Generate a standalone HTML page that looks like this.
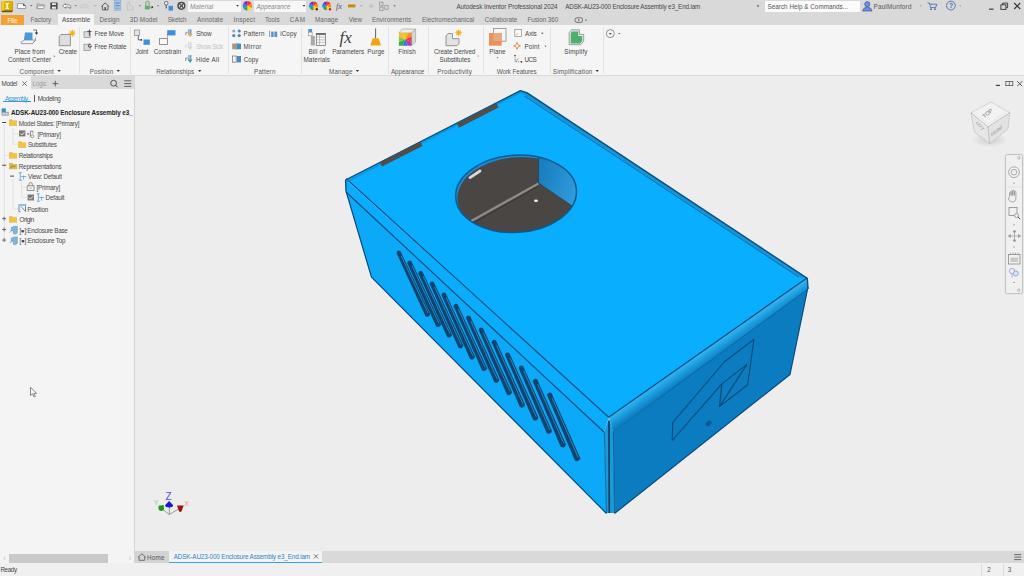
<!DOCTYPE html>
<html><head><meta charset="utf-8">
<style>
*{margin:0;padding:0;box-sizing:border-box}
html,body{width:1024px;height:576px;overflow:hidden;background:#ededed;font-family:"Liberation Sans",sans-serif;color:#3c3c3c}
.a{position:absolute}
.t{position:absolute;line-height:1;white-space:nowrap;font-size:6.3px}
svg{position:absolute;left:0;top:0;overflow:visible}
</style></head><body>
<div class="a" style="left:0;top:0;width:1024px;height:26px;background:#d9d9d9"></div>
<div class="a" style="left:0.5px;top:15px;width:23.5px;height:10px;background:#f5a132"></div>
<div class="a" style="left:57.6px;top:14.4px;width:36.6px;height:12px;background:#f5f5f5"></div>
<div class="a" style="left:187.7px;top:1px;width:53px;height:10.5px;background:#f7f7f7"></div>
<div class="a" style="left:253.7px;top:1px;width:52.3px;height:10.5px;background:#f7f7f7"></div>
<div class="a" style="left:765px;top:1px;width:94.7px;height:10.5px;background:#fbfbfb"></div>
<div class="a" style="left:0;top:25px;width:1024px;height:51px;background:#f5f5f5;border-bottom:1px solid #d9d9d9"></div>
<div class="a" style="left:79.3px;top:27px;width:1px;height:47px;background:#e2e2e2"></div>
<div class="a" style="left:130.4px;top:27px;width:1px;height:47px;background:#e2e2e2"></div>
<div class="a" style="left:228px;top:27px;width:1px;height:47px;background:#e2e2e2"></div>
<div class="a" style="left:300.8px;top:27px;width:1px;height:47px;background:#e2e2e2"></div>
<div class="a" style="left:387.5px;top:27px;width:1px;height:47px;background:#e2e2e2"></div>
<div class="a" style="left:427.7px;top:27px;width:1px;height:47px;background:#e2e2e2"></div>
<div class="a" style="left:482.6px;top:27px;width:1px;height:47px;background:#e2e2e2"></div>
<div class="a" style="left:549.5px;top:27px;width:1px;height:47px;background:#e2e2e2"></div>
<div class="a" style="left:602.5px;top:27px;width:1px;height:47px;background:#e2e2e2"></div>
<div class="a" style="left:0;top:76px;width:135px;height:487px;background:#f4f4f4;border-right:1px solid #d6d6d6"></div>
<div class="a" style="left:31px;top:76px;width:103px;height:13.2px;background:#d9d9d9"></div>
<div class="a" style="left:3.3px;top:101.2px;width:27.7px;height:0.8px;background:#3b9bd6"></div>
<div class="a" style="left:34.2px;top:94.5px;width:0.8px;height:7.5px;background:#555"></div>
<div class="a" style="left:8.8px;top:553.8px;width:99.2px;height:8.8px;background:#c9c9c9"></div>
<div class="a" style="left:134.5px;top:551px;width:890px;height:11.6px;background:#d9d9d9"></div>
<div class="a" style="left:134.5px;top:551px;width:34.3px;height:11.6px;background:#d3d3d3"></div>
<div class="a" style="left:168.8px;top:551px;width:152.9px;height:11.6px;background:#f3f3f3;border-bottom:1.2px solid #3aa0e0"></div>
<div class="a" style="left:0;top:563px;width:1024px;height:13px;background:#f0f0f0"></div>
<div class="a" style="left:981px;top:564px;width:1px;height:12px;background:#dcdcdc"></div>
<div class="a" style="left:1003px;top:564px;width:1px;height:12px;background:#dcdcdc"></div>
<svg width="1024" height="576" viewBox="0 0 1024 576">
  <defs>
    <linearGradient id="rb" gradientUnits="userSpaceOnUse" x1="708" y1="347.5" x2="715.5" y2="358.2">
      <stop offset="0" stop-color="#36b6f4"/><stop offset="0.45" stop-color="#1c9edf"/><stop offset="1" stop-color="#0b7dc0"/>
    </linearGradient>
    <linearGradient id="iw" x1="0" y1="0" x2="1" y2="0.3">
      <stop offset="0" stop-color="#1578b8"/><stop offset="1" stop-color="#36a6e6"/>
    </linearGradient>
    <clipPath id="hc"><ellipse cx="516.1" cy="193.8" rx="60.5" ry="38.6" transform="rotate(-3.7 516.1 193.8)"/></clipPath>
  </defs>
  <!-- left face -->
  <polygon points="346,191 604,432 606.5,513.5 371.5,277.2" fill="#0ca9f8"/>
  <!-- right face -->
  <polygon points="613,432 808,287 790,374.5 614.5,513.5" fill="#0a7cbf"/>
  <!-- left bend -->
  <polygon points="345.6,179.5 609,417 604,432 346,192" fill="#0aadfc"/>
  <!-- right bend -->
  <polygon points="609,417 807,278 808,289 613,432" fill="url(#rb)"/>
  <!-- seam -->
  <polygon points="604,432 609,418 613.3,432 614.5,513 606.5,513" fill="#1a9ad8"/>
  <line x1="609" y1="421" x2="609.3" y2="513" stroke="#0a3a5c" stroke-width="1.6"/>
  <line x1="604.3" y1="432" x2="606.5" y2="513" stroke="#0b5a8c" stroke-width="0.8"/>
  <line x1="613.3" y1="432" x2="614.5" y2="513" stroke="#0b5a8c" stroke-width="0.8"/>
  <!-- top face -->
  <polygon points="345.6,179.5 520.4,90.3 527,92 807,278 609,417" fill="#0aaefe"/>
  <!-- hole -->
  <ellipse cx="516.1" cy="193.8" rx="60.5" ry="38.6" transform="rotate(-3.7 516.1 193.8)" fill="#168ed6"/>
  <g clip-path="url(#hc)">
    <ellipse cx="517.8" cy="195.8" rx="60.5" ry="38.6" transform="rotate(-3.7 517.8 195.8)" fill="#4a4643"/>
    <polygon points="538,150 538,183 572,206 600,206 600,150" fill="url(#iw)"/>
    <line x1="538.5" y1="183.5" x2="466" y2="224" stroke="#8d8b89" stroke-width="2.4"/>
    <line x1="538.5" y1="186" x2="468" y2="226" stroke="#2e2c2a" stroke-width="0.7"/>
    <line x1="538.5" y1="150" x2="538.5" y2="183" stroke="#2b3a44" stroke-width="0.8"/>
    <line x1="538.5" y1="183" x2="575" y2="208" stroke="#2b3a44" stroke-width="0.8"/>
    <path d="M470,177.6 L480,171" stroke="#d8d8d8" stroke-width="2.8" stroke-linecap="round"/>
  </g>
  <ellipse cx="536" cy="200.8" rx="1.9" ry="1.3" fill="#f2f2f2"/>
  <ellipse cx="516.1" cy="193.8" rx="60.5" ry="38.6" transform="rotate(-3.7 516.1 193.8)" fill="none" stroke="#0b5a90" stroke-width="1.5"/>
  <!-- hinge strips -->
  
  
  <!-- vents -->
  <g fill="#0b4470">
<path d="M400.5,251.2 L430.2,314.0 Q429.3,318.2 425.5,316.2 L396.5,253.0 Q397.2,249.4 400.5,251.2 Z"/>
<path d="M411.3,261.1 L441.0,324.2 Q440.0,328.4 436.2,326.4 L407.2,263.0 Q408.0,259.4 411.3,261.1 Z"/>
<path d="M422.4,271.4 L452.0,334.7 Q451.0,338.9 447.2,336.9 L418.3,273.3 Q419.1,269.6 422.4,271.4 Z"/>
<path d="M433.8,282.1 L463.4,345.5 Q462.3,349.7 458.5,347.8 L429.7,284.0 Q430.5,280.3 433.8,282.1 Z"/>
<path d="M445.6,293.0 L475.0,356.7 Q474.0,360.9 470.1,358.9 L441.4,294.9 Q442.3,291.3 445.6,293.0 Z"/>
<path d="M457.7,304.4 L487.1,368.2 Q486.0,372.4 482.1,370.5 L453.5,306.3 Q454.4,302.6 457.7,304.4 Z"/>
<path d="M470.1,316.0 L499.4,380.1 Q498.3,384.3 494.4,382.3 L465.9,317.9 Q466.8,314.2 470.1,316.0 Z"/>
<path d="M482.9,328.0 L512.1,392.3 Q510.9,396.5 507.0,394.5 L478.6,329.9 Q479.5,326.2 482.9,328.0 Z"/>
<path d="M495.9,340.3 L525.1,404.8 Q523.9,409.1 519.9,407.1 L491.6,342.2 Q492.6,338.5 495.9,340.3 Z"/>
<path d="M509.3,353.0 L538.4,417.7 Q537.2,421.9 533.2,420.0 L505.0,354.9 Q505.9,351.2 509.3,353.0 Z"/>
<path d="M523.1,366.0 L552.0,430.9 Q550.8,435.2 546.8,433.2 L518.6,367.9 Q519.7,364.2 523.1,366.0 Z"/>
<path d="M537.1,379.3 L566.0,444.5 Q564.7,448.7 560.7,446.8 L532.7,381.3 Q533.7,377.6 537.1,379.3 Z"/>
<path d="M551.5,393.0 L580.3,458.3 Q579.0,462.6 575.0,460.7 L547.0,395.0 Q548.1,391.3 551.5,393.0 Z"/>
</g>
  <g stroke="#2a8cc8" stroke-width="0.9" stroke-linecap="round">
<line x1="401.4" y1="256.3" x2="428.0" y2="312.8"/>
<line x1="412.2" y1="266.2" x2="438.7" y2="323.0"/>
<line x1="423.3" y1="276.5" x2="449.8" y2="333.5"/>
<line x1="434.7" y1="287.2" x2="461.1" y2="344.3"/>
<line x1="446.4" y1="298.1" x2="472.8" y2="355.5"/>
<line x1="458.5" y1="309.5" x2="484.8" y2="367.0"/>
<line x1="470.9" y1="321.1" x2="497.1" y2="378.9"/>
<line x1="483.6" y1="333.1" x2="509.8" y2="391.1"/>
<line x1="496.7" y1="345.5" x2="522.8" y2="403.6"/>
<line x1="510.1" y1="358.1" x2="536.1" y2="416.5"/>
<line x1="523.8" y1="371.1" x2="549.7" y2="429.7"/>
<line x1="537.8" y1="384.5" x2="563.7" y2="443.3"/>
<line x1="552.2" y1="398.2" x2="578.0" y2="457.2"/>
</g>
  <!-- logo -->
  <path d="M672.2,440.5 L721.9,383.9 L746.9,364.4 L719.5,406.6 L721.9,383.9 M719.5,406.6 L747.7,384.7 L753.9,339.4 L724.2,362 L672.8,422.5 L672.2,440.5" fill="none" stroke="#0a4a78" stroke-width="1.1" stroke-linejoin="round"/>
  <ellipse cx="708.6" cy="423.4" rx="3" ry="1.8" transform="rotate(-40 708.6 423.4)" fill="#0b5f92" stroke="#0a4f7e" stroke-width="0.6"/>
  <!-- edges -->
  <g fill="none" stroke="#0a4a7a" stroke-width="1.2" stroke-linejoin="round">
    <polyline points="346,191 371.5,277.2 606.5,513.5"/>
    <polyline points="614.5,513.5 790,374.5 808,287"/>
    <line x1="346.2" y1="178.6" x2="609" y2="417.5"/>
    <line x1="346" y1="192" x2="604" y2="432"/>
    <line x1="609" y1="417" x2="807" y2="278"/>
    <line x1="613" y1="432" x2="808" y2="289" stroke="#0b5a90" stroke-width="0.7"/>
  </g>
  <g fill="none" stroke-linejoin="round">
    <polyline points="347,181.7 520.5,92.4 526.6,94.3" stroke="#1590d2" stroke-width="1.3"/>
    <line x1="526" y1="94.6" x2="803" y2="277.6" stroke="#1a92d4" stroke-width="2.4"/>
    <line x1="524.5" y1="96" x2="799" y2="277.2" stroke="#0d5f98" stroke-width="0.9"/>
    <polyline points="346,191 345.6,180 520.4,90.6 527,92.8 807.3,278.3 808,289" stroke="#0d4f7c" stroke-width="1.4"/>
  </g>
  <polygon points="380,162.4 420.5,141.7 422.5,145.9 382,166.6" fill="#544c48"/>
  <polygon points="457,123.6 496.5,103.4 498.5,107.6 459,127.8" fill="#544c48"/>
</svg>
<svg width="1024" height="576" viewBox="0 0 1024 576"><rect x="1.5" y="1" width="11.2" height="11.2" rx="1.2" fill="#6e5200"/><rect x="1.5" y="1" width="11.2" height="9.6" rx="1.2" fill="#e2b100"/><rect x="1.5" y="1" width="2.5" height="9.6" fill="#f0cc30"/><rect x="6.3" y="3" width="1.8" height="5.8" fill="#fff8d8"/><rect x="5.4" y="3" width="3.6" height="1" fill="#fff8d8"/><rect x="5.4" y="7.9" width="3.6" height="1" fill="#fff8d8"/><path d="M17.4,3.6h5.8l2.4,2.1v2.8h-8.2z" fill="#f8f8f8" stroke="#8a8a8a" stroke-width="0.8"/><path d="M23,3.4l2.8,2.4h-2.8z" fill="#444"/><path d="M30.00,5.20h2.40l-1.20,1.40z" fill="#555"/><path d="M37,8.6v-4.6h2.6l0.8,0.8h3.4v1.2" fill="none" stroke="#8a8a8a" stroke-width="0.8"/><path d="M37,8.6l1.4-2.8h6.4l-1.4,2.8z" fill="#f5f5f5" stroke="#8a8a8a" stroke-width="0.8"/><rect x="50.3" y="2.4" width="7.3" height="6.9" rx="0.4" fill="#4d4d4d"/><rect x="52" y="3.2" width="3.9" height="1.8" fill="#e8e8e8"/><rect x="52" y="6.6" width="3.9" height="2.2" fill="#e8e8e8"/><path d="M62.5,5.9l3-2.4v1.4h3.2q2.1,0,2.1,2v1.2h-1.6v-1.1h-3.7v1.3z" fill="#fff" stroke="#777" stroke-width="0.8"/><path d="M74.50,5.20h2.40l-1.20,1.40z" fill="#666"/><path d="M88.4,5.9l-3-2.4v1.4h-3.2q-2.1,0,-2.1,2v1.2h1.6v-1.1h3.7v1.3z" fill="none" stroke="#c6c6c6" stroke-width="0.8"/><path d="M93.00,5.20h2.40l-1.20,1.40z" fill="#bbb"/><path d="M95.00,5.40h1.60l-0.80,1.00z" fill="#777"/><path d="M101.3,6.6l3.9-3.8l3.9,3.8M102.4,5.6v4.3h5.6v-4.3" fill="none" stroke="#555" stroke-width="0.9"/><rect x="104.4" y="7.2" width="1.6" height="2.7" fill="#555"/><rect x="114.2" y="0.6" width="6.6" height="9.6" fill="#a9c9e6" stroke="#7fa7cc" stroke-width="0.6"/><rect x="115.3" y="2.4" width="4.4" height="1.2" fill="#5c8fc0"/><rect x="115.3" y="5" width="4.4" height="1.2" fill="#5c8fc0"/><rect x="115.3" y="7.6" width="4.4" height="1.2" fill="#7ea8d0"/><path d="M127,3.5l2.5-1.5v3l3.5,2v3h-5.5z" fill="none" stroke="#c2c2c2" stroke-width="0.9"/><path d="M138.90,5.30h2.20l-1.10,1.40z" fill="#777"/><rect x="144.9" y="5.4" width="4.9" height="4" fill="#5fae6f"/><path d="M145.8,5.4v-2.6a1.7,1.7 0 0 1 3.4,0v2.6" fill="#bfe0c4" stroke="#6a8a70" stroke-width="0.8"/><path d="M150.5,7.2h2.4l-1,-1.2M152.9,7.2l-1,1.2" fill="none" stroke="#333" stroke-width="0.9"/><path d="M156.90,5.30h2.20l-1.10,1.40z" fill="#777"/><circle cx="166.2" cy="3.2" r="1.8" fill="#f0f0f0" stroke="#555" stroke-width="0.8"/><path d="M166.2,5v3.5" stroke="#333" stroke-width="0.9"/><rect x="168.5" y="5.8" width="4.5" height="4.8" fill="#3f8fd8"/><circle cx="181.4" cy="5.8" r="4.1" fill="#4a4a4a"/><circle cx="181.4" cy="5.8" r="2.6" fill="#e8e8e8"/><path d="M179.5,3.9l3.8,3.8M183.3,3.9l-3.8,3.8" stroke="#4a4a4a" stroke-width="1.3"/><path d="M236.20,5.10h2.60l-1.30,1.60z" fill="#333"/><path d="M247.4,5.8L247.40,1.10A4.7,4.7 0 0 1 251.47,3.45z" fill="#e53935"/><path d="M247.4,5.8L251.47,3.45A4.7,4.7 0 0 1 251.47,8.15z" fill="#fb8c00"/><path d="M247.4,5.8L251.47,8.15A4.7,4.7 0 0 1 247.40,10.50z" fill="#fdd835"/><path d="M247.4,5.8L247.40,10.50A4.7,4.7 0 0 1 243.33,8.15z" fill="#43a047"/><path d="M247.4,5.8L243.33,8.15A4.7,4.7 0 0 1 243.33,3.45z" fill="#1e88e5"/><path d="M247.4,5.8L243.33,3.45A4.7,4.7 0 0 1 247.40,1.10z" fill="#8e24aa"/><path d="M302.70,5.10h2.60l-1.30,1.60z" fill="#333"/><path d="M313.5,5.8L313.50,1.40A4.4,4.4 0 0 1 317.31,3.60z" fill="#e53935"/><path d="M313.5,5.8L317.31,3.60A4.4,4.4 0 0 1 317.31,8.00z" fill="#fb8c00"/><path d="M313.5,5.8L317.31,8.00A4.4,4.4 0 0 1 313.50,10.20z" fill="#fdd835"/><path d="M313.5,5.8L313.50,10.20A4.4,4.4 0 0 1 309.69,8.00z" fill="#43a047"/><path d="M313.5,5.8L309.69,8.00A4.4,4.4 0 0 1 309.69,3.60z" fill="#1e88e5"/><path d="M313.5,5.8L309.69,3.60A4.4,4.4 0 0 1 313.50,1.40z" fill="#8e24aa"/><circle cx="316.8" cy="9.2" r="1.2" fill="#333"/><path d="M326.7,5.8L326.70,1.40A4.4,4.4 0 0 1 330.51,3.60z" fill="#e53935"/><path d="M326.7,5.8L330.51,3.60A4.4,4.4 0 0 1 330.51,8.00z" fill="#fb8c00"/><path d="M326.7,5.8L330.51,8.00A4.4,4.4 0 0 1 326.70,10.20z" fill="#fdd835"/><path d="M326.7,5.8L326.70,10.20A4.4,4.4 0 0 1 322.89,8.00z" fill="#43a047"/><path d="M326.7,5.8L322.89,8.00A4.4,4.4 0 0 1 322.89,3.60z" fill="#1e88e5"/><path d="M326.7,5.8L322.89,3.60A4.4,4.4 0 0 1 326.70,1.40z" fill="#8e24aa"/><circle cx="330" cy="9.2" r="1.2" fill="#a03030"/><text x="336" y="9.4" font-family="Liberation Serif" font-style="italic" font-size="8.5" fill="#555">fx</text><rect x="348" y="4" width="7.4" height="3.8" fill="#e8b030"/><rect x="348" y="5.5" width="7.4" height="0.8" fill="#555"/><path d="M360.10,5.30h2.20l-1.10,1.40z" fill="#999"/><path d="M371.2,3.5v5M368.7,6h5" stroke="#bdbdbd" stroke-width="1.2"/><path d="M379.6,2.2h3.5v3.5h-3.5zM384.8,5.5h3.5v3.8h-3.5zM379.6,7h3.5v3.5h-3.5z" fill="none" stroke="#888" stroke-width="0.7"/><path d="M393.30,5.30h2.40l-1.20,1.40z" fill="#666"/><path d="M757.5,4.6l1.8,1.3l-1.8,1.3z" fill="#555"/><circle cx="867.3" cy="4.2" r="2.6" fill="#6f8fd8" stroke="#3a5aa8" stroke-width="0.7"/><path d="M862.6,11q0.4,-3.8,4.7,-3.8q4.3,0,4.7,3.8z" fill="#6f8fd8" stroke="#3a5aa8" stroke-width="0.7"/><path d="M919.90,5.45h1.80l-0.90,1.10z" fill="#777"/><path d="M927.6,3h1.8l1.2,4.6h5l1.2,-3.4h-6.6" fill="none" stroke="#4a6fa5" stroke-width="0.9"/><circle cx="931" cy="9.2" r="0.9" fill="#4a6fa5"/><circle cx="935" cy="9.2" r="0.9" fill="#4a6fa5"/><circle cx="950.9" cy="5.6" r="4.4" fill="none" stroke="#4a6fa5" stroke-width="0.9"/><text x="948.9" y="8.3" font-family="Liberation Sans" font-size="6.8" font-weight="700" fill="#4a6fa5">?</text><path d="M959.40,5.45h1.80l-0.90,1.10z" fill="#777"/><rect x="989" y="8.6" width="4.5" height="1.1" fill="#333"/><rect x="1000.9" y="4.8" width="5" height="4.6" fill="none" stroke="#333" stroke-width="0.9"/><path d="M1002.6,4.6v-1.5h5v4.6h-1.6" fill="none" stroke="#333" stroke-width="0.9"/><path d="M1014.2,3l6,6M1020.2,3l-6,6" stroke="#333" stroke-width="1.1"/><path d="M21.3,41.8l3.4,-1.8h10.9l-3.1,3.6h-11.2z" fill="#f4f4f4" stroke="#8c8c8c" stroke-width="0.8"/><path d="M32.5,43.6l3.1,-3.6v-2.4" fill="none" stroke="#8c8c8c" stroke-width="0.8"/><path d="M25,32.5h7.5v7.5h-8.6z" fill="#4a9ad8"/><path d="M33.2,30h3.3v3" fill="none" stroke="#333" stroke-width="0.7"/><path d="M34.8,32.6h3.4l-1.7,2.2z" fill="#222"/><path d="M61,34.5h9.4v11.2h-11.2v-9.4z" fill="#dedede" stroke="#8a8a8a" stroke-width="0.9"/><polygon points="72.30,29.00 73.02,31.45 75.27,30.23 74.05,32.48 76.50,33.20 74.05,33.92 75.27,36.17 73.02,34.95 72.30,37.40 71.58,34.95 69.33,36.17 70.55,33.92 68.10,33.20 70.55,32.48 69.33,30.23 71.58,31.45" fill="#f2b21e"/><rect x="84" y="31.8" width="6.2" height="5.7" fill="#dcdcdc" stroke="#8a8a8a" stroke-width="0.7"/><path d="M89.4,29.6v6.2M87.2,31.4h4.4" stroke="#333" stroke-width="0.8"/><rect x="84" y="44.2" width="6.2" height="6.2" fill="#dcdcdc" stroke="#8a8a8a" stroke-width="0.7"/><path d="M91.6,45.6a1.6,1.6 0 1 1 -1.2,-1.5" fill="none" stroke="#333" stroke-width="0.9"/><rect x="134.4" y="30" width="5" height="5.4" fill="#e4e4e4" stroke="#888" stroke-width="0.7"/><path d="M138.3,35.4v4.5h3" fill="none" stroke="#333" stroke-width="0.7"/><circle cx="141.3" cy="39.9" r="0.8" fill="#222"/><rect x="143.5" y="39.5" width="6.3" height="5.3" fill="#3d8fd6"/><rect x="159.4" y="38.6" width="8" height="5.8" fill="#f8f8f8" stroke="#7a7a7a" stroke-width="0.8"/><path d="M167.4,38.6v-5" stroke="#c89090" stroke-width="0.8"/><rect x="167.2" y="30.2" width="8.3" height="5.2" fill="#3d8fd6"/><path d="M187.6,32.3h-1.8v3" fill="none" stroke="#9080a0" stroke-width="0.9"/><rect x="188.3" y="29.3" width="1.2" height="6" fill="#5a8ac0"/><rect x="190.2" y="29.3" width="1.2" height="6" fill="#5a8ac0"/><path d="M187.6,33.8h5l-2.5,3.5z" fill="#e8b030"/><path d="M187.6,45.2h-1.8v3" fill="none" stroke="#d8d8d8" stroke-width="0.9"/><rect x="188.3" y="42.2" width="1.2" height="6" fill="#d4d4d4"/><rect x="190.2" y="42.2" width="1.2" height="6" fill="#d4d4d4"/><path d="M187.6,46.7h5l-2.5,3.5z" fill="#d8d8d8"/><path d="M187.6,58.0h-1.8v3" fill="none" stroke="#7a7a7a" stroke-width="0.9"/><rect x="188.3" y="55.0" width="1.2" height="6" fill="#6a94b8"/><rect x="190.2" y="55.0" width="1.2" height="6" fill="#6a94b8"/><path d="M187.6,59.5h5l-2.5,3.5z" fill="#3aa0b0"/><circle cx="233.8" cy="31" r="1.6" fill="#9aa8b4"/><circle cx="239.2" cy="31" r="1.6" fill="#4a86b8"/><circle cx="233.8" cy="35.6" r="1.6" fill="#4a86b8"/><circle cx="239.2" cy="35.6" r="1.6" fill="#4a86b8"/><rect x="232.2" y="43.6" width="4" height="5.6" fill="#a09888"/><rect x="237" y="43.6" width="4" height="5.6" fill="#4a8ac0"/><path d="M236.6,42.8v7.2" stroke="#555" stroke-width="0.5"/><rect x="232.4" y="56" width="3.8" height="6.2" fill="none" stroke="#7a7a7a" stroke-width="0.8"/><rect x="237" y="56" width="4" height="6.4" fill="#4a8ac0"/><path d="M269.6,37v-6.5" stroke="#6a8aa8" stroke-width="0.8"/><rect x="271.2" y="31.6" width="2.4" height="5.4" fill="#5a90c8"/><rect x="274.4" y="31.6" width="2.8" height="5.4" fill="#5a90c8"/><rect x="308.3" y="29" width="3.8" height="3.2" fill="#4a96d0"/><rect x="308.3" y="32.2" width="3.8" height="3.6" fill="#fff" stroke="#888" stroke-width="0.6"/><rect x="310.8" y="36" width="4" height="9.5" fill="#a8a8a8"/><rect x="316.3" y="33.4" width="9.1" height="12" fill="#f4f4f4" stroke="#777" stroke-width="0.8"/><rect x="316.3" y="33.4" width="9.1" height="1.4" fill="#555"/><path d="M316.3,37.2h9.1M316.3,39.8h9.1M316.3,42.4h9.1M319.5,34.8v10.6" stroke="#999" stroke-width="0.5"/><text x="339.5" y="43.2" font-family="Liberation Serif" font-style="italic" font-size="17" fill="#404040">fx</text><path d="M375.6,28.4v10" stroke="#555" stroke-width="0.9"/><path d="M372.6,38.2h6l2.4,7.3h-10.6z" fill="#f0a516"/><defs><linearGradient id="fg1" x1="0" y1="0" x2="1" y2="1"><stop offset="0" stop-color="#2eb84a"/><stop offset="0.35" stop-color="#f6c020"/><stop offset="0.6" stop-color="#f04a3a"/><stop offset="1" stop-color="#3a6ae0"/></linearGradient><linearGradient id="fg2" x1="1" y1="0" x2="0" y2="1"><stop offset="0" stop-color="#f58020" stop-opacity="0.9"/><stop offset="0.5" stop-color="#e04090" stop-opacity="0.5"/><stop offset="1" stop-color="#2a90f0" stop-opacity="0.9"/></linearGradient></defs><path d="M398.9,33l3.2,-4h13.5l-4,4z" fill="#ececec" stroke="#999" stroke-width="0.6"/><path d="M411.6,33l4,-4v13l-4,3.7z" fill="#d8d8d8" stroke="#999" stroke-width="0.6"/><clipPath id="fcl"><rect x="398.9" y="33" width="12.7" height="12.7"/></clipPath><g clip-path="url(#fcl)"><path d="M405.25,39.35L400.66,28.26L409.84,28.26z" fill="#f6c21c"/><path d="M405.25,39.35L409.84,28.26L416.34,34.76z" fill="#f7941d"/><path d="M405.25,39.35L416.34,34.76L416.34,43.94z" fill="#ec3a3a"/><path d="M405.25,39.35L416.34,43.94L409.84,50.44z" fill="#b83aa8"/><path d="M405.25,39.35L409.84,50.44L400.66,50.44z" fill="#3a6ee0"/><path d="M405.25,39.35L400.66,50.44L394.16,43.94z" fill="#2fb04a"/><path d="M405.25,39.35L394.16,43.94L394.16,34.76z" fill="#8cc63f"/><path d="M405.25,39.35L394.16,34.76L400.66,28.26z" fill="#f6c21c"/></g><path d="M446,36l2,-2.5h4.5v5.2h6.5v5l-2,2h-11z" fill="#e2e2e2" stroke="#8a8a8a" stroke-width="0.9"/><polygon points="458.60,28.60 459.32,31.05 461.57,29.83 460.35,32.08 462.80,32.80 460.35,33.52 461.57,35.77 459.32,34.55 458.60,37.00 457.88,34.55 455.63,35.77 456.85,33.52 454.40,32.80 456.85,32.08 455.63,29.83 457.88,31.05" fill="#f2b21e"/><rect x="493.4" y="28.6" width="12.6" height="12.6" fill="none" stroke="#8a8a8a" stroke-width="0.8"/><rect x="489" y="33" width="12.7" height="12.7" fill="#e8874a" fill-opacity="0.9"/><rect x="493.4" y="33" width="8.3" height="8.2" fill="#e8a880"/><rect x="514.8" y="29.6" width="6.8" height="6.8" fill="#fafafa" stroke="#8a8a8a" stroke-width="0.7"/><path d="M516,35.4l2.2,-2.2" stroke="#e08a50" stroke-width="0.8"/><path d="M517,42.4l1,2.5l2.5,1l-2.5,1l-1,2.5l-1,-2.5l-2.5,-1l2.5,-1z" fill="none" stroke="#e08a50" stroke-width="0.9"/><path d="M515,55.5v6.2h6.5" fill="none" stroke="#555" stroke-width="0.7" stroke-dasharray="1,0.8"/><circle cx="521.5" cy="61.8" r="0.9" fill="#444"/><circle cx="515" cy="55.5" r="0.8" fill="#444"/><path d="M515.5,61l3,-2.5" stroke="#555" stroke-width="0.6"/><path d="M569.2,32.5l2.3,-2.7h8v4.6h4.2v6.9l-3.1,3.4h-11.4z" fill="#d8f0dc" stroke="#8a8a8a" stroke-width="0.8"/><path d="M570.8,33l1.4,-1.5h6v4.4h4v5.2l-2.2,2.3h-9.2z" fill="#4fae6e"/><circle cx="610.3" cy="33.6" r="4" fill="none" stroke="#777" stroke-width="0.8"/><path d="M608.8,32.9h3l-1.5,1.8z" fill="#444"/><path d="M618.10,33.05h2.20l-1.10,1.30z" fill="#444"/><path d="M57.40,69.90h3.40l-1.70,2.00z" fill="#3a3a3a"/><path d="M116.50,69.90h3.40l-1.70,2.00z" fill="#3a3a3a"/><path d="M198.00,69.90h3.40l-1.70,2.00z" fill="#3a3a3a"/><path d="M355.70,69.90h3.40l-1.70,2.00z" fill="#3a3a3a"/><path d="M595.50,69.90h3.40l-1.70,2.00z" fill="#3a3a3a"/><path d="M53.40,55.85h1.80l-0.90,1.10z" fill="#555"/><path d="M477.30,55.75h1.80l-0.90,1.10z" fill="#555"/><path d="M496.70,57.35h1.80l-0.90,1.10z" fill="#555"/><path d="M541.20,32.85h2.20l-1.10,1.30z" fill="#444"/><path d="M544.40,45.75h2.20l-1.10,1.30z" fill="#444"/><rect x="575" y="17.8" width="7.6" height="4.6" rx="2" fill="none" stroke="#555" stroke-width="0.8"/><circle cx="578.8" cy="20.1" r="0.8" fill="#555"/><path d="M585.00,19.70h2.00l-1.00,1.20z" fill="#444"/><path d="M22.3,81.3l4.5,4.5M26.8,81.3l-4.5,4.5" stroke="#555" stroke-width="0.8"/><path d="M55.3,80.8v5.6M52.5,83.6h5.6" stroke="#555" stroke-width="0.9"/><circle cx="113.6" cy="83.2" r="2.9" fill="none" stroke="#444" stroke-width="0.9"/><path d="M115.6,85.2l2.2,2.2" stroke="#444" stroke-width="1"/><path d="M124.2,80.8h7M124.2,83.6h7M124.2,86.4h7" stroke="#555" stroke-width="0.9"/><path d="M4.4,125v115.5M13.1,128v16.2h5M4.4,155.4h4.5M4.4,219.3h0M13.1,178.5v30.3h5M21.6,180v17.5h5M13.1,133.9h5.5M21.6,187.4h5" fill="none" stroke="#dadada" stroke-width="0.7"/><rect x="1.6" y="108.4" width="4.3" height="3.8" fill="#3f8db8"/><rect x="1.6" y="111.8" width="7.1" height="3.8" fill="#8a9aa8"/><rect x="2.6" y="112.8" width="2" height="1.8" fill="#e8eef4"/><rect x="5.6" y="112.8" width="2" height="1.8" fill="#e8eef4"/><rect x="2.2" y="122.05" width="4" height="0.9" fill="#333"/><path d="M9.1,119.6h3l1,1h3.9v5.2h-7.9z" fill="#e8b838"/><rect x="9.1" y="120.8" width="7.9" height="4.8" fill="#f0c44c"/><rect x="19" y="130.4" width="6.4" height="6" fill="#7a7a7a"/><path d="M20.3,133.5l1.5,1.5l2.6,-2.8" fill="none" stroke="#f4f4f4" stroke-width="0.9"/><path d="M27.8,133.9h1.6M30.4,131.2v5.4M30.4,131.2h2.5v2.2M32.3,134.8a1.5,1.5 0 1 0 0.1,0" fill="none" stroke="#666" stroke-width="0.7"/><circle cx="27.9" cy="133.9" r="0.6" fill="#333"/><path d="M18.2,141.6h3l1,1h3.9v5.2h-7.9z" fill="#e8b838"/><rect x="18.2" y="142.79999999999998" width="7.9" height="4.8" fill="#f0c44c"/><path d="M9.1,152.2h3l1,1h3.9v5.2h-7.9z" fill="#e8b838"/><rect x="9.1" y="153.39999999999998" width="7.9" height="4.8" fill="#f0c44c"/><rect x="2.2" y="164.75" width="4" height="0.9" fill="#333"/><path d="M9.2,163h3l1,1h3.9v5.2h-7.9z" fill="#d8b848"/><rect x="9.2" y="164.2" width="7.9" height="4.8" fill="#d8bc5c"/><path d="M10.4,168.2l2,-2.5l1.5,1.5l1.5,-1.5" fill="none" stroke="#6a6a3a" stroke-width="0.7"/><rect x="10.1" y="175.65" width="4" height="0.9" fill="#333"/><path d="M18.8,172.8h3M20.3,172.8v7.4M18.8,180.20000000000002h3M21.1,176.5h2.2M23.6,175.60000000000002v4" fill="none" stroke="#5a9ad0" stroke-width="0.8"/><path d="M23.3,176.5h3" stroke="#5a9ad0" stroke-width="0.7"/><rect x="27.2" y="185.8" width="6.8" height="4.6" fill="none" stroke="#777" stroke-width="0.8"/><path d="M28.9,185.8v-1.6a1.7,1.7 0 0 1 3.4,0v1.6" fill="none" stroke="#777" stroke-width="0.8"/><path d="M29.6,188.1h2" stroke="#777" stroke-width="0.7"/><rect x="27.6" y="194.5" width="6.4" height="6" fill="#7a7a7a"/><path d="M28.900000000000002,197.6l1.5,1.5l2.6,-2.8" fill="none" stroke="#f4f4f4" stroke-width="0.9"/><path d="M36.8,193.8h3M38.3,193.8v7.4M36.8,201.20000000000002h3M39.099999999999994,197.5h2.2M41.599999999999994,196.60000000000002v4" fill="none" stroke="#5a9ad0" stroke-width="0.8"/><path d="M41.3,197.5h3" stroke="#5a9ad0" stroke-width="0.7"/><path d="M18.3,205h8" stroke="#4aa0c8" stroke-width="1.2"/><path d="M19,206v5.8M19,211.8h1.5M21,206.5l4,4.5M25.5,206v5.8" fill="none" stroke="#5a7a98" stroke-width="0.9"/><path d="M2.2,218.6h4M4.2,216.6v4" stroke="#555" stroke-width="0.8"/><path d="M9.1,216.2h3l1,1h3.9v5.2h-7.9z" fill="#e8b838"/><rect x="9.1" y="217.39999999999998" width="7.9" height="4.8" fill="#f0c44c"/><path d="M2.2,229.5h4M4.2,227.5v4" stroke="#555" stroke-width="0.8"/><path d="M11.2,227.5l3,-1.2h3.2v6.5l-1.6,1.2h-2.4l-0.4,-3.5h-1.8z" fill="#7fb4dc" stroke="#5a9ac8" stroke-width="0.5"/><path d="M9.7,232.5l2.5,-2.5" stroke="#4a7aa8" stroke-width="0.7"/><path d="M2.2,240.1h4M4.2,238.1v4" stroke="#555" stroke-width="0.8"/><path d="M11.2,238.1l3,-1.2h3.2v6.5l-1.6,1.2h-2.4l-0.4,-3.5h-1.8z" fill="#7fb4dc" stroke="#5a9ac8" stroke-width="0.5"/><path d="M9.7,243.1l2.5,-2.5" stroke="#4a7aa8" stroke-width="0.7"/><path d="M5.2,556.6l-1.3,1.7l1.3,1.7" fill="none" stroke="#aaa" stroke-width="0.6"/><path d="M129.4,556.6l1.3,1.7l-1.3,1.7" fill="none" stroke="#aaa" stroke-width="0.6"/><path d="M138,557.4l3.9,-3.6l3.9,3.6M139.1,556.5v3.8h5.6v-3.8" fill="none" stroke="#555" stroke-width="0.8"/><path d="M314,554.4l4,4M318,554.4l-4,4" stroke="#555" stroke-width="0.8"/><path d="M1014.2,554.6h7M1014.2,557.1h7M1014.2,559.6h7" stroke="#444" stroke-width="0.75"/><path d="M30.5,387.3v8.2l2,-1.7l1.6,3.2l1.2,-0.6l-1.5,-3.1h2.8z" fill="#fafafa" stroke="#6a6a6a" stroke-width="0.8" stroke-linejoin="round"/><rect x="995.8" y="84.8" width="4.2" height="1.2" fill="#444"/><rect x="1005.8" y="81.4" width="7" height="4.2" fill="none" stroke="#555" stroke-width="0.8"/><path d="M1009.3,81.4v4.2" stroke="#555" stroke-width="0.7"/><path d="M1017.2,81.2l5,5M1022.2,81.2l-5,5" stroke="#444" stroke-width="0.9"/><defs><radialGradient id="vcs" cx="0.5" cy="0.5" r="0.5"><stop offset="0" stop-color="#000" stop-opacity="0.14"/><stop offset="1" stop-color="#000" stop-opacity="0"/></radialGradient></defs><ellipse cx="990" cy="140" rx="18" ry="7" fill="url(#vcs)"/><path d="M991,101.9l18.8,10.9l-1.8,15.8l-18.2,15.2l-15.2,-11.6l-3.7,-19.4z" fill="#ececec"/><path d="M991,101.9l18.8,10.9l-21.8,14l-17.1,-14z" fill="#f2f2f2" stroke="#a8a8a8" stroke-width="0.6" stroke-dasharray="2,0.8"/><path d="M970.9,112.8l17.1,14l1.8,17l-15.2,-11.6z" fill="#e6e6e6" stroke="#a8a8a8" stroke-width="0.6" stroke-dasharray="2,0.8"/><path d="M988,126.8l21.8,-14l-1.8,15.8l-18.2,15.2z" fill="#e2e2e2" stroke="#a8a8a8" stroke-width="0.6" stroke-dasharray="2,0.8"/><path d="M975.5,113.5l12.5,10.5l18,-11.5" fill="none" stroke="#c8c8c8" stroke-width="0.5" stroke-dasharray="1.5,1"/><text x="0" y="0" transform="translate(984.5,118.5) rotate(-40)" font-family="Liberation Sans" font-size="5.6" fill="#707070">TOP</text><text x="0" y="0" transform="translate(975.5,122.5) rotate(52) skewX(-10)" font-family="Liberation Sans" font-size="4.2" fill="#8a8a8a">LEFT</text><text x="0" y="0" transform="translate(992,136.5) rotate(-38) skewX(-8)" font-family="Liberation Sans" font-size="4.2" fill="#8a8a8a">FRONT</text><rect x="1005.4" y="154.6" width="17.2" height="139" rx="1.8" fill="#f0f0f0" stroke="#b8b8b8" stroke-width="0.9"/><circle cx="1018.9" cy="157.9" r="1.3" fill="none" stroke="#999" stroke-width="0.6"/><circle cx="1018.8" cy="290.1" r="1.3" fill="none" stroke="#999" stroke-width="0.6"/><circle cx="1014" cy="172.2" r="5.4" fill="none" stroke="#9a9a9a" stroke-width="0.8"/><circle cx="1014" cy="172.2" r="2.8" fill="none" stroke="#9a9a9a" stroke-width="0.8"/><rect x="1013.4" y="182.7" width="1.2" height="1" fill="#777"/><rect x="1013.4" y="224.4" width="1.2" height="1" fill="#777"/><rect x="1013.4" y="246.5" width="1.2" height="1" fill="#777"/><rect x="1013.4" y="282.0" width="1.2" height="1" fill="#777"/><path d="M1006.5,187h15" stroke="#d8d8d8" stroke-width="0.6"/><path d="M1009.5,196.5v-3.5a0.8,0.8 0 0 1 1.6,0v2.5v-4a0.8,0.8 0 0 1 1.6,0v4v-4.5a0.8,0.8 0 0 1 1.6,0v4.5v-3.5a0.8,0.8 0 0 1 1.6,0v5.5q0,4.5,-3.5,4.5q-2.5,0,-4,-3z" fill="none" stroke="#8a8a8a" stroke-width="0.7"/><rect x="1009" y="207.5" width="8" height="8" fill="none" stroke="#8a8a8a" stroke-width="0.8"/><circle cx="1016.5" cy="215.5" r="2" fill="#f0f0f0" stroke="#8a8a8a" stroke-width="0.8"/><path d="M1018,217l2.2,2.2" stroke="#555" stroke-width="1"/><path d="M1014.5,230v12M1008.5,236h12M1014.5,230l-1.5,2h3zM1014.5,242l-1.5,-2h3zM1008.5,236l2,-1.5v3zM1020.5,236l-2,-1.5v3z" fill="#999" stroke="#9a9a9a" stroke-width="0.7"/><rect x="1008.5" y="254.5" width="11.5" height="9.5" fill="none" stroke="#8a8a8a" stroke-width="0.8"/><rect x="1010.5" y="257.5" width="7.5" height="4.5" fill="#c8c8c8"/><path d="M1010.5,254.5v-2M1013,254.5v-2M1015.5,254.5v-2M1018,254.5v-2" stroke="#8a8a8a" stroke-width="0.6"/><circle cx="1012" cy="271" r="2.6" fill="none" stroke="#8a9ad8" stroke-width="0.8"/><circle cx="1015.8" cy="273.5" r="2.6" fill="#d8e0f4" stroke="#8a9ad8" stroke-width="0.8"/><path d="M1012,274v3.5" stroke="#8a9ad8" stroke-width="0.8"/><path d="M169.4,514.5l-8,-6M169.4,514.5v-9M169.4,514.5l10,-6" stroke="#777" stroke-width="0.7"/><path d="M158.5,505.8l5.2,-0.8l0.3,4.2q-0.8,2,-3,1.8q-2.5,-0.4,-2.5,-2.6z" fill="#1a9a1a"/><path d="M169.1,501.1l3.9,4q0.6,2.4,-3.9,2.4q-4.5,0,-3.9,-2.4z" fill="#1a1ac8"/><path d="M177,505.6h6.7l-2.2,5.8q-1.2,0.8,-2.4,0z" fill="#a01010"/><text x="165.6" y="499.6" font-family="Liberation Sans" font-size="10" fill="#5050d0">Z</text><text x="153.8" y="505" font-family="Liberation Sans" font-size="7.2" fill="#8ad08a">Y</text><text x="184.2" y="505.8" font-family="Liberation Sans" font-size="7" fill="#f09090">X</text></svg>
<div class="t" style="left:189.9px;top:4px;color:#8a8a8a;font-style:italic;letter-spacing:0.13px">Material</div>
<div class="t" style="left:256.4px;top:4px;color:#8a8a8a;font-style:italic;letter-spacing:-0.02px">Appearance</div>
<div class="t" style="left:456.4px;top:4px;color:#474747;letter-spacing:-0.05px">Autodesk Inventor Professional 2024</div>
<div class="t" style="left:565.2px;top:4px;color:#474747;letter-spacing:-0.15px">ADSK-AU23-000 Enclosure Assembly e3_End.iam</div>
<div class="t" style="left:767.5px;top:3.5px;color:#555;letter-spacing:0.03px">Search Help &amp; Commands...</div>
<div class="t" style="left:873.5px;top:3.7px;color:#555;letter-spacing:0.22px">PaulMunford</div>
<div class="t" style="left:7.6px;top:17.7px;color:#fff;letter-spacing:-0.12px">File</div>
<div class="t" style="left:30.5px;top:17.3px;color:#686868;letter-spacing:-0.04px">Factory</div>
<div class="t" style="left:62px;top:17.3px;color:#444;letter-spacing:0.08px">Assemble</div>
<div class="t" style="left:99.5px;top:17.3px;color:#686868;letter-spacing:0.06px">Design</div>
<div class="t" style="left:129.8px;top:17.3px;color:#686868;letter-spacing:0.09px">3D Model</div>
<div class="t" style="left:167.8px;top:17.3px;color:#686868;letter-spacing:-0.13px">Sketch</div>
<div class="t" style="left:197px;top:17.3px;color:#686868;letter-spacing:0.14px">Annotate</div>
<div class="t" style="left:233.5px;top:17.3px;color:#686868;letter-spacing:0.19px">Inspect</div>
<div class="t" style="left:264.9px;top:17.3px;color:#686868;letter-spacing:0.01px">Tools</div>
<div class="t" style="left:289.7px;top:17.3px;color:#686868;letter-spacing:0.6px">CAM</div>
<div class="t" style="left:315px;top:17.3px;color:#686868;letter-spacing:0.09px">Manage</div>
<div class="t" style="left:348.75px;top:17.3px;color:#686868;letter-spacing:-0.11px">View</div>
<div class="t" style="left:372px;top:17.3px;color:#686868;letter-spacing:0.06px">Environments</div>
<div class="t" style="left:422px;top:17.3px;color:#686868;letter-spacing:0.04px">Electromechanical</div>
<div class="t" style="left:484.7px;top:17.3px;color:#686868;letter-spacing:0.03px">Collaborate</div>
<div class="t" style="left:527.5px;top:17.3px;color:#686868;letter-spacing:-0.05px">Fusion 360</div>
<div class="t" style="left:14.5px;top:49.4px;color:#474747;letter-spacing:0.05px">Place from</div>
<div class="t" style="left:7.95px;top:57px;color:#474747;letter-spacing:0.03px">Content Center</div>
<div class="t" style="left:58.7px;top:49.4px;color:#474747;letter-spacing:-0.12px">Create</div>
<div class="t" style="left:19.4px;top:68.5px;color:#555555;letter-spacing:0.22px">Component</div>
<div class="t" style="left:94.5px;top:31.3px;color:#474747;letter-spacing:-0.08px">Free Move</div>
<div class="t" style="left:94.5px;top:44.1px;color:#474747;letter-spacing:-0.13px">Free Rotate</div>
<div class="t" style="left:89.7px;top:68.5px;color:#555555;letter-spacing:0.17px">Position</div>
<div class="t" style="left:135.7px;top:49.4px;color:#474747;letter-spacing:-0.16px">Joint</div>
<div class="t" style="left:153.7px;top:49.4px;color:#474747;letter-spacing:0.08px">Constrain</div>
<div class="t" style="left:196.2px;top:31.3px;color:#474747;letter-spacing:-0.17px">Show</div>
<div class="t" style="left:196.2px;top:44.1px;color:#c4c4c4;letter-spacing:-0.3px">Show Sick</div>
<div class="t" style="left:195.9px;top:56.7px;color:#474747;letter-spacing:0.26px">Hide All</div>
<div class="t" style="left:156.3px;top:68.5px;color:#555555">Relationships</div>
<div class="t" style="left:243.5px;top:31.3px;color:#474747;letter-spacing:0.1px">Pattern</div>
<div class="t" style="left:280.2px;top:31.3px;color:#474747;letter-spacing:0.11px">iCopy</div>
<div class="t" style="left:243.5px;top:44.1px;color:#474747;letter-spacing:0.29px">Mirror</div>
<div class="t" style="left:243.7px;top:56.7px;color:#474747;letter-spacing:0.01px">Copy</div>
<div class="t" style="left:254px;top:68.5px;color:#555555;letter-spacing:0.18px">Pattern</div>
<div class="t" style="left:308.4px;top:49.4px;color:#474747;letter-spacing:0.19px">Bill of</div>
<div class="t" style="left:303.5px;top:57px;color:#474747;letter-spacing:0.11px">Materials</div>
<div class="t" style="left:332.2px;top:49.4px;color:#474747;letter-spacing:-0.07px">Parameters</div>
<div class="t" style="left:367.2px;top:49.4px;color:#474747;letter-spacing:0.15px">Purge</div>
<div class="t" style="left:329px;top:68.5px;color:#555555;letter-spacing:0.15px">Manage</div>
<div class="t" style="left:398.2px;top:49.4px;color:#474747;letter-spacing:0.14px">Finish</div>
<div class="t" style="left:390.9px;top:68.5px;color:#555555;letter-spacing:-0.07px">Appearance</div>
<div class="t" style="left:433.9px;top:49.4px;color:#474747;letter-spacing:-0.07px">Create Derived</div>
<div class="t" style="left:439.6px;top:57px;color:#474747;letter-spacing:-0.04px">Substitutes</div>
<div class="t" style="left:437.3px;top:68.5px;color:#555555;letter-spacing:0.19px">Productivity</div>
<div class="t" style="left:489.3px;top:49.4px;color:#474747">Plane</div>
<div class="t" style="left:525px;top:31.3px;color:#474747;letter-spacing:-0.05px">Axis</div>
<div class="t" style="left:524.5px;top:44.1px;color:#474747;letter-spacing:0.15px">Point</div>
<div class="t" style="left:524.6px;top:56.7px;color:#474747;letter-spacing:-0.55px">UCS</div>
<div class="t" style="left:496.8px;top:68.5px;color:#555555;letter-spacing:-0.12px">Work Features</div>
<div class="t" style="left:564.3px;top:49.4px;color:#474747;letter-spacing:0.16px">Simplify</div>
<div class="t" style="left:552.8px;top:68.5px;color:#555555;letter-spacing:0.19px">Simplification</div>
<div class="t" style="left:1.5px;top:81.2px;color:#474747;letter-spacing:-0.34px">Model</div>
<div class="t" style="left:32.5px;top:81.2px;color:#a0a0a0;letter-spacing:-0.25px">Logic</div>
<div class="t" style="left:5px;top:95.8px;color:#3b9bd6;letter-spacing:-0.58px">Assembly</div>
<div class="t" style="left:37.7px;top:95.8px;color:#474747;letter-spacing:-0.35px">Modeling</div>
<div class="t" style="left:11.1px;top:110px;color:#222;font-weight:700;letter-spacing:-0.08px">ADSK-AU23-000 Enclosure Assembly e3_</div>
<div class="t" style="left:18.8px;top:121px;color:#474747;letter-spacing:-0.22px">Model States: [Primary]</div>
<div class="t" style="left:37.4px;top:131.6px;color:#474747;letter-spacing:-0.21px">[Primary]</div>
<div class="t" style="left:27.9px;top:142.1px;color:#474747;letter-spacing:-0.22px">Substitutes</div>
<div class="t" style="left:18.8px;top:153.1px;color:#474747;letter-spacing:-0.31px">Relationships</div>
<div class="t" style="left:18.8px;top:163.6px;color:#474747;letter-spacing:-0.22px">Representations</div>
<div class="t" style="left:28.1px;top:174.3px;color:#474747;letter-spacing:-0.26px">View: Default</div>
<div class="t" style="left:36.5px;top:185.1px;color:#474747;letter-spacing:-0.19px">[Primary]</div>
<div class="t" style="left:45.6px;top:195.2px;color:#474747;letter-spacing:-0.17px">Default</div>
<div class="t" style="left:27.2px;top:206.5px;color:#474747;letter-spacing:-0.19px">Position</div>
<div class="t" style="left:19.6px;top:217px;color:#474747;letter-spacing:-0.44px">Origin</div>
<div class="t" style="left:19.4px;top:227.6px;color:#474747;letter-spacing:-0.28px">[&#9679;]:Enclosure Base</div>
<div class="t" style="left:19.4px;top:238.1px;color:#474747;letter-spacing:-0.17px">[&#9679;]:Enclosure Top</div>
<div class="t" style="left:0.4px;top:567.3px;color:#474747;letter-spacing:-0.37px">Ready</div>
<div class="t" style="left:147.1px;top:555px;color:#555555;letter-spacing:0.2px">Home</div>
<div class="t" style="left:173.7px;top:554.1px;color:#2b86c8;letter-spacing:-0.12px">ADSK-AU23-000 Enclosure Assembly e3_End.iam</div>
<div class="t" style="left:987.2px;top:566.9px;color:#555555">2</div>
<div class="t" style="left:1007.8px;top:566.9px;color:#555555">3</div>
</body></html>
